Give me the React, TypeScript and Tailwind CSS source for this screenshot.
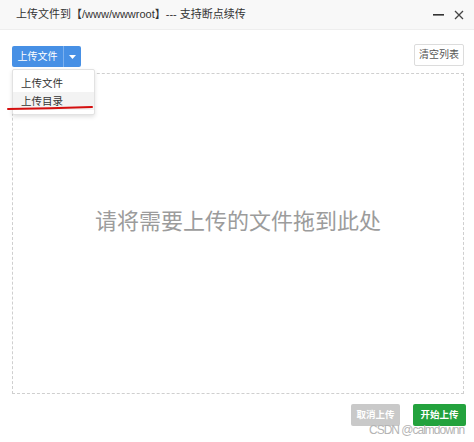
import React from "react";

export default function App() {
  const font = { fontFamily: '"Liberation Sans", "Noto Sans CJK SC", sans-serif' };
  return (
    <div className="relative w-[474px] h-[442px] bg-white overflow-hidden" style={font}>
      {/* title bar */}
      <div className="h-[30px] bg-[#f8f8f8] border-b border-[#eeeeee] flex items-center pl-[16px] pr-[10px]">
        <span className="text-[11px] text-[#333] flex-1 leading-none">上传文件到【/www/wwwroot】--- 支持断点续传</span>
        <div className="flex items-center gap-[10px]">
          <svg width="11" height="11" viewBox="0 0 11 11">
            <rect x="0" y="5" width="11" height="1.6" fill="#333" />
          </svg>
          <svg width="10" height="10" viewBox="0 0 10 10">
            <path d="M1 1 L9 9 M9 1 L1 9" stroke="#444" strokeWidth="1.3" />
          </svg>
        </div>
      </div>

      {/* body */}
      <div className="pl-[12px] pr-[10px]">
        <div className="mt-[14px] h-[22px] flex justify-between items-start">
          <div className="mt-[2px] h-[21px] w-[69px] flex rounded-[2px] bg-[#4790e5] text-white">
            <div className="w-[51px] flex items-center justify-center text-[10px] leading-none">上传文件</div>
            <div className="w-px bg-[#7cb0ee]" />
            <div className="flex-1 flex items-center justify-center">
              <svg width="7" height="4" viewBox="0 0 7 4">
                <path d="M0 0 L7 0 L3.5 4 Z" fill="#fff" />
              </svg>
            </div>
          </div>
          <div className="h-[22px] w-[50px] border border-[#dcdcdc] rounded-[2px] bg-white flex items-center justify-center text-[10px] text-[#555] leading-none">
            清空列表
          </div>
        </div>

        <div className="mt-[7px] h-[321px] border border-dashed border-[#cfcfcf] flex flex-col items-center pt-[136px]">
          <span className="text-[22px] leading-[24px] text-[#9c9c9c]">请将需要上传的文件拖到此处</span>
        </div>
      </div>

      {/* footer */}
      <div className="mt-[10px] flex justify-end gap-[13px] pr-[8px]">
        <div className="h-[22px] w-[49px] rounded-[2px] bg-[#c9c9c9] text-white text-[9.5px] font-bold flex items-center justify-center leading-none">
          取消上传
        </div>
        <div className="h-[22px] w-[53px] rounded-[2px] bg-[#23a23d] text-white text-[9.5px] font-bold flex items-center justify-center leading-none">
          开始上传
        </div>
      </div>

      {/* dropdown menu */}
      <div className="absolute left-[12px] top-[69px] w-[83px] h-[46px] bg-white border border-[#e2e2e2] rounded-[2px] shadow-[0_2px_4px_rgba(0,0,0,0.12)] pt-[4px]">
        <div className="h-[18px] flex items-center pl-[8px] text-[10.5px] text-[#333] leading-none">上传文件</div>
        <div className="h-[18px] flex items-center pl-[8px] text-[10.5px] text-[#333] leading-none bg-[#f3f3f3]">上传目录</div>
      </div>

      {/* red underline annotation */}
      <svg className="absolute left-0 top-[104px]" width="100" height="8" viewBox="0 0 100 8">
        <path d="M8 5 Q50 4.5 92 3" stroke="#d40f0f" strokeWidth="2" fill="none" strokeLinecap="round" />
      </svg>

      {/* watermark */}
      <div className="absolute left-[369px] top-[423px] text-[12px] tracking-[-1px] text-[#b4b4b4] leading-[14px]">
        CSDN @calmdownn
      </div>
    </div>
  );
}
